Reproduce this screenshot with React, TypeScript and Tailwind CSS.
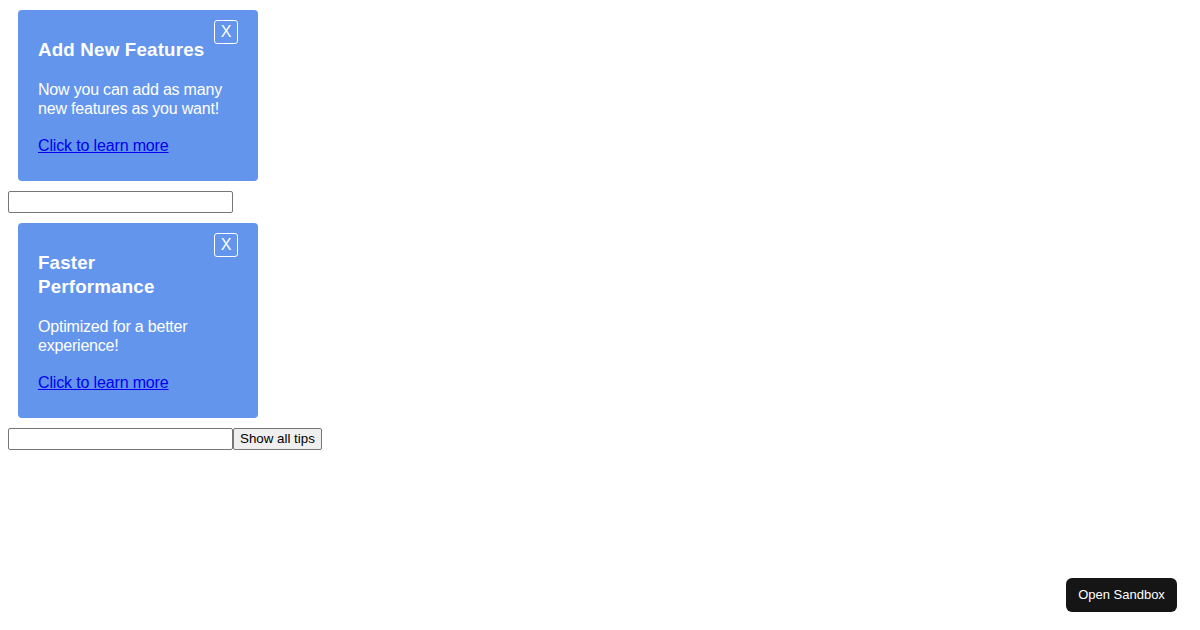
import { useState } from "react";

type Tip = { id: number; title: string; body: string };

const tips: Tip[] = [
    { id: 1, title: "Add New Features", body: "Now you can add as many new features as you want!" },
    { id: 2, title: "Faster Performance", body: "Optimized for a better experience!" },
];

function TipCard({ tip, onClose }: { tip: Tip; onClose: () => void }) {
    return (
        <div className="relative mx-[10px] my-[10px] w-[240px] rounded-[4px] bg-[#6495ed] px-5 pt-[10px] pb-[10px] text-white">
            <button
                onClick={onClose}
                className="absolute top-[10px] right-[20px] flex h-6 w-6 items-center justify-center rounded-[3px] border border-white bg-transparent text-[16px] leading-none text-white"
            >
                X
            </button>
            <h3 className="my-[18px] pr-[30px] text-[18.72px] font-bold leading-[24px] tracking-[0.2px]">{tip.title}</h3>
            <p className="mt-[18px] mb-[18px] text-[16px] leading-[19px] tracking-[-0.2px]">{tip.body}</p>
            <p className="my-4 text-[16px] leading-[19px] tracking-[-0.15px]">
                <a href="#" className="text-[#0000ee] underline">Click to learn more</a>
            </p>
        </div>
    );
}

export default function App() {
    const [hidden, setHidden] = useState<number[]>([]);

    return (
        <div className="min-h-[630px] bg-white px-2 font-['Liberation_Sans',Arial,sans-serif] text-black">
            {tips.map((tip, i) => (
                <div key={tip.id}>
                    {!hidden.includes(tip.id) && (
                        <TipCard tip={tip} onClose={() => setHidden([...hidden, tip.id])} />
                    )}
                    <div className="flex">
                        <input className="h-[22px] w-[225px] rounded-[2px] border border-[#767676] bg-white px-[2px] text-[13.33px]" />
                        {i === tips.length - 1 && (
                            <button
                                onClick={() => setHidden([])}
                                className="h-[22px] rounded-[2px] border border-[#767676] bg-[#efefef] px-[6px] text-[13.33px] leading-none text-black"
                            >
                                Show all tips
                            </button>
                        )}
                    </div>
                </div>
            ))}

            <button className="fixed right-[23px] bottom-[18px] h-[34px] w-[111px] rounded-[6px] bg-[#151515] text-[13px] text-white">
                Open Sandbox
            </button>
        </div>
    );
}
